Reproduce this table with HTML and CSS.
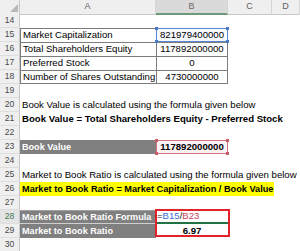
FILE: index.html
```html
<!DOCTYPE html>
<html>
<head>
<meta charset="utf-8">
<link rel="stylesheet" href="styles.css">
</head>
<body>
<div class="sheet">
  <div class="row head">
    <div class="corner"><svg width="20" height="14" viewBox="0 0 20 14"><polygon points="18,4 18,12 10,12" fill="#b8b8b8"/></svg></div>
    <div class="ch">A</div>
    <div class="ch active">B</div>
    <div class="ch">C</div>
    <div class="ch">D</div>
  </div>
  <div class="row"><div class="rh">14</div></div>
  <div class="row"><div class="rh">15</div><div class="c tb">Market Capitalization</div><div class="c tb tbr num ref blue">821979400000<i class="h tl"></i><i class="h tr"></i><i class="h bl"></i><i class="h br"></i></div></div>
  <div class="row"><div class="rh">16</div><div class="c tb">Total Shareholders Equity</div><div class="c tb tbr num">117892000000</div></div>
  <div class="row"><div class="rh">17</div><div class="c tb">Preferred Stock</div><div class="c tb tbr num">0</div></div>
  <div class="row"><div class="rh">18</div><div class="c tb last">Number of Shares Outstanding</div><div class="c tb tbr last num">4730000000</div></div>
  <div class="row"><div class="rh">19</div></div>
  <div class="row"><div class="rh">20</div><div class="c wide">Book Value is calculated using the formula given below</div></div>
  <div class="row"><div class="rh">21</div><div class="c wide bold">Book Value = Total Shareholders Equity - Preferred Stock</div></div>
  <div class="row"><div class="rh">22</div></div>
  <div class="row"><div class="rh">23</div><div class="c fill">Book Value</div><div class="c num bold ref red">117892000000<i class="h tl"></i><i class="h tr"></i><i class="h bl"></i><i class="h br"></i></div></div>
  <div class="row"><div class="rh">24</div></div>
  <div class="row"><div class="rh">25</div><div class="c wide">Market to Book Ratio is calculated using the formula given below</div></div>
  <div class="row"><div class="rh">26</div><div class="c yellow bold">Market to Book Ratio = Market Capitalization / Book Value</div></div>
  <div class="row"><div class="rh">27</div></div>
  <div class="row"><div class="rh sel">28</div><div class="c fill f28">Market to Book Ratio Formula</div><div class="c formula">=<span class="rb">B15</span>/<span class="rr">B23</span></div></div>
  <div class="row"><div class="rh">29</div><div class="c fill">Market to Book Ratio</div><div class="c num bold">6.97</div></div>
  <div class="row"><div class="rh">30</div></div>
  <div class="annot"></div>
</div>
</body>
</html>
```

FILE: styles.css
```css
body {
  margin: 0;
  background: #ffffff;
}

.sheet {
  position: relative;
  width: 300px;
  height: 251px;
  overflow: hidden;
  font-family: "Liberation Sans", Arial, sans-serif;
  font-size: 9.6px;
  color: #000000;
  background: #ffffff;
}

.row {
  display: grid;
  grid-template-columns: 20px 136px 72px 44px 28px;
  height: 14px;
  line-height: 14px;
}

.corner {
  background: #efefef;
  border-right: 1px solid #c8c8c8;
  border-bottom: 1px solid #c8c8c8;
  box-sizing: border-box;
  line-height: 0;
}

.corner svg {
  display: block;
}

.ch {
  box-sizing: border-box;
  background: #efefef;
  border-right: 1px solid #d6d6d6;
  border-bottom: 1px solid #c8c8c8;
  text-align: center;
  color: #606060;
  font-size: 9px;
  line-height: 13px;
}

.ch.active {
  background: #dadada;
  border-bottom: 2px solid #6e9a7c;
  color: #6a6a6a;
  line-height: 12px;
}

.rh {
  box-sizing: border-box;
  background: #efefef;
  border-right: 1px solid #c8c8c8;
  border-bottom: 1px solid #dedede;
  text-align: center;
  color: #4a4a4a;
  font-size: 8.6px;
  line-height: 13px;
}

.rh.sel {
  background: #e4e4e4;
  color: #3f7a55;
}

.c {
  box-sizing: border-box;
  padding: 0 2px;
  white-space: nowrap;
  overflow: hidden;
}

.wide {
  grid-column: 2 / -1;
  overflow: visible;
}

.bold {
  font-weight: bold;
}

.num {
  text-align: center;
}

.tb {
  border-top: 1px solid #7c7c7c;
  border-left: 1px solid #7c7c7c;
  line-height: 12px;
}

.tbr {
  border-right: 1px solid #7c7c7c;
}

.tb.last {
  border-bottom: 1px solid #7c7c7c;
  line-height: 11px;
}

.ref {
  position: relative;
  overflow: visible;
  line-height: 12px;
}

.ref.blue {
  border: 1px solid #5b88d2;
  background: #f7f9fe;
}

.ref.red {
  border: 1px solid #d27382;
  background: #fdf2f3;
}

.h {
  position: absolute;
  width: 3px;
  height: 3px;
}

.blue .h {
  background: #4a78c8;
}

.red .h {
  background: #c85a6a;
}

.h.tl { left: -2px; top: -2px; }
.h.tr { right: -2px; top: -2px; }
.h.bl { left: -2px; bottom: -2px; }
.h.br { right: -2px; bottom: -2px; }

.fill {
  background: #808080;
  color: #ffffff;
  font-weight: bold;
  font-size: 9.1px;
}

.f28 {
  border-top: 1px solid #a0a0a0;
  border-bottom: 1px solid #cfcfcf;
  line-height: 12px;
}

.yellow {
  grid-column: 2 / -1;
  justify-self: start;
  min-width: 254px;
  padding-right: 1px;
  background: #ffff00;
  font-size: 9.2px;
}

.formula {
  padding-left: 1px;
  border-bottom: 2px solid #217346;
  line-height: 12px;
  color: #222222;
}

.rb {
  color: #3d6fd6;
}

.rr {
  color: #c5465a;
}

.annot {
  position: absolute;
  left: 155px;
  top: 209px;
  width: 75px;
  height: 28px;
  box-sizing: border-box;
  border: 2px solid #e2222b;
}
```
